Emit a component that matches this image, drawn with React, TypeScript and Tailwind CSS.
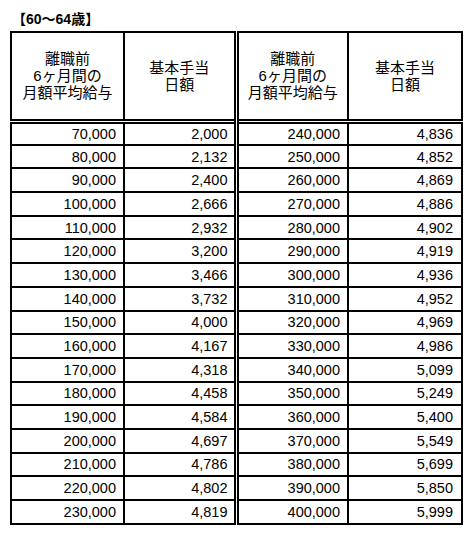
import React from 'react'

const left: [number, number][] = [
  [70000, 2000], [80000, 2132], [90000, 2400], [100000, 2666], [110000, 2932],
  [120000, 3200], [130000, 3466], [140000, 3732], [150000, 4000], [160000, 4167],
  [170000, 4318], [180000, 4458], [190000, 4584], [200000, 4697], [210000, 4786],
  [220000, 4802], [230000, 4819],
]

const right: [number, number][] = [
  [240000, 4836], [250000, 4852], [260000, 4869], [270000, 4886], [280000, 4902],
  [290000, 4919], [300000, 4936], [310000, 4952], [320000, 4969], [330000, 4986],
  [340000, 5099], [350000, 5249], [360000, 5400], [370000, 5549], [380000, 5699],
  [390000, 5850], [400000, 5999],
]

const fmt = (n: number) => n.toLocaleString('en-US')

const font = { fontFamily: '"Liberation Sans", "Noto Sans CJK JP", sans-serif' }

function HeadCells({ last }: { last?: boolean }) {
  return (
    <>
      <th className="border-2 border-black font-normal text-[15px] leading-[17px] align-middle text-center">
        離職前<br />6ヶ月間の<br />月額平均給与
      </th>
      <th
        className={
          last
            ? 'border-2 border-black font-normal text-[15px] leading-[17px] align-middle text-center'
            : 'border-2 border-r-[5px] [border-right-style:double] border-black font-normal text-[15px] leading-[17px] align-middle text-center'
        }
      >
        基本手当<br />日額
      </th>
    </>
  )
}

export default function App() {
  return (
    <div className="w-[474px] h-[533px] bg-white text-black" style={font}>
      {/* 見出し */}
      <div className="h-[31px] pt-[11px] pl-[12px] text-[14px] leading-[17px] font-bold">【60〜64歳】</div>

      <table className="ml-[10px] w-[451px] table-fixed border-collapse border-2 border-black">
        <colgroup>
          <col className="w-[113px]" />
          <col className="w-[112px]" />
          <col className="w-[112px]" />
          <col className="w-[114px]" />
        </colgroup>
        <thead>
          <tr className="h-[89px] border-b-[5px] border-double border-black">
            <HeadCells />
            <HeadCells last />
          </tr>
        </thead>
        <tbody>
          {left.map((row, i) => (
            <tr key={row[0]} className="h-[23.7px]">
              <td className="border-2 border-black text-right pr-[7px] text-[14.5px] leading-[16px]">{fmt(row[0])}</td>
              <td className="border-2 border-r-[5px] [border-right-style:double] border-black text-right pr-[6px] text-[14.5px] leading-[16px]">
                {fmt(row[1])}
              </td>
              <td className="border-2 border-black text-right pr-[7px] text-[14.5px] leading-[16px]">{fmt(right[i][0])}</td>
              <td className="border-2 border-black text-right pr-[8px] text-[14.5px] leading-[16px]">{fmt(right[i][1])}</td>
            </tr>
          ))}
        </tbody>
      </table>
    </div>
  )
}
